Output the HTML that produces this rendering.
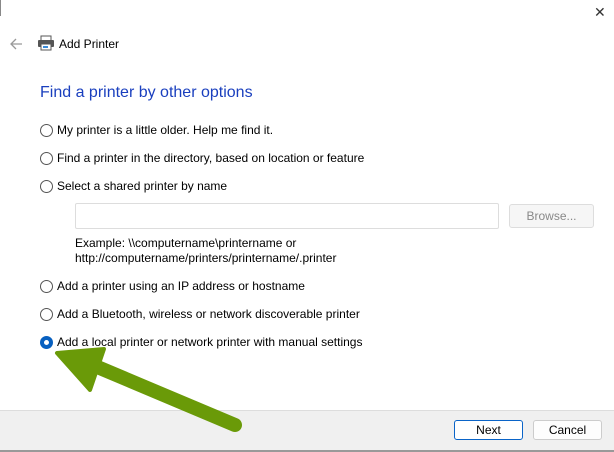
<!DOCTYPE html>
<html><head><style>
body{margin:0;width:614px;height:452px;background:#fff;position:relative;overflow:hidden;font-family:"Liberation Sans",sans-serif;font-size:12px;color:#000}
.a{position:absolute;white-space:nowrap}
.r{position:absolute;left:40px;width:11px;height:11px;border:1px solid #555;border-radius:50%;background:#fff}
.t{position:absolute;left:57px;white-space:nowrap;line-height:14px}
</style></head><body>
<div class="a" style="left:0;top:0;width:1px;height:16px;background:#888"></div>
<div class="a" style="left:594px;top:4px;font-size:14px;color:#333">✕</div>
<svg class="a" style="left:9px;top:37px" width="14" height="14"><path d="M13 7H2M7 2L2 7l5 5" stroke="#999" stroke-width="1.3" fill="none"/></svg>
<svg class="a" style="left:37px;top:35px" width="18" height="16"><rect x="4" y="1" width="10" height="5" fill="#fff" stroke="#555"/><rect x="1" y="5" width="16" height="7" rx="1" fill="#555"/><rect x="4" y="9" width="10" height="6" fill="#fff" stroke="#555"/><rect x="6" y="11" width="5" height="2" fill="#3a8ad8"/></svg>
<div class="a" style="left:59px;top:37px;font-size:12px">Add Printer</div>
<div class="a" style="left:40px;top:84px;font-size:16px;color:#1a3fbe">Find a printer by other options</div>
<div class="r" style="top:124px"></div><div class="t" style="top:123px">My printer is a little older. Help me find it.</div>
<div class="r" style="top:152px"></div><div class="t" style="top:151px">Find a printer in the directory, based on location or feature</div>
<div class="r" style="top:180px"></div><div class="t" style="top:179px">Select a shared printer by name</div>
<div class="a" style="left:75px;top:203px;width:422px;height:24px;border:1px solid #ddd;border-radius:2px"></div>
<div class="a" style="left:509px;top:204px;width:83px;height:22px;border:1px solid #ddd;border-radius:3px;background:#f6f6f6;color:#888;text-align:center;line-height:22px">Browse...</div>
<div class="t" style="left:75px;top:236px">Example: \\computername\printername or</div>
<div class="t" style="left:75px;top:251px">http://computername/printers/printername/.printer</div>
<div class="r" style="top:280px"></div><div class="t" style="top:279px">Add a printer using an IP address or hostname</div>
<div class="r" style="top:308px"></div><div class="t" style="top:307px">Add a Bluetooth, wireless or network discoverable printer</div>
<div class="r" style="top:336px;border:4px solid #0760c0;width:5px;height:5px"></div><div class="t" style="top:335px">Add a local printer or network printer with manual settings</div>
<div class="a" style="left:0;top:410px;width:614px;height:41px;background:#f0f0f0;border-top:1px solid #ddd"></div>
<div class="a" style="left:0;top:450px;width:614px;height:2px;background:#999"></div>
<div class="a" style="left:454px;top:420px;width:67px;height:18px;border:1px solid #0a64c8;border-radius:3px;background:#fff;text-align:center;line-height:18px">Next</div>
<div class="a" style="left:533px;top:420px;width:67px;height:18px;border:1px solid #ccc;border-radius:3px;background:#fdfdfd;text-align:center;line-height:18px">Cancel</div>
<svg class="a" style="left:0;top:0" width="614" height="452"><g fill="#6a9a08" stroke="#6a9a08" stroke-linejoin="round" stroke-linecap="round"><line x1="235" y1="425" x2="95" y2="366" stroke-width="14"/><polygon points="57,353 104,349 90,390" stroke-width="4"/></g></svg>
</body></html>
